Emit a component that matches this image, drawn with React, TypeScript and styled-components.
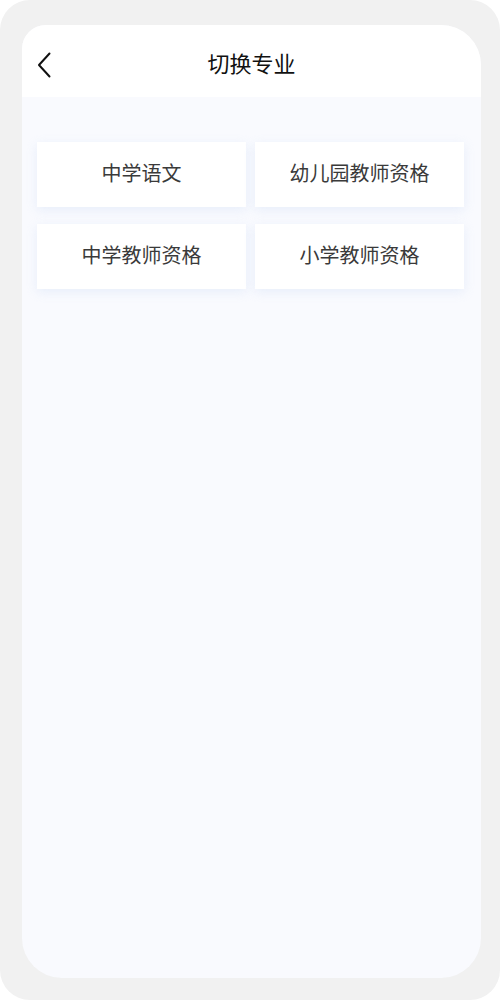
import React, { FC } from 'react';
import styled, { createGlobalStyle } from 'styled-components';

const GlobalStyle = createGlobalStyle`
    html, body {
        margin: 0;
        padding: 0;
        background: #ffffff;
    }
    body {
        font-family: "Noto Sans CJK SC", "Noto Sans", sans-serif;
    }
`;

const Frame = styled.div`
    width: 500px;
    height: 1000px;
    box-sizing: border-box;
    background-color: #f1f1f1;
    border-radius: 30px;
    padding: 25px 19px 22px 22px;
    display: flex;
`;

const Screen = styled.div`
    flex: 1;
    display: flex;
    flex-direction: column;
    background-color: #f9fafe;
    border-radius: 24px 40px 40px 40px;
    overflow: hidden;
`;

const Header = styled.div`
    position: relative;
    height: 72px;
    flex-shrink: 0;
    background-color: #ffffff;
    display: flex;
    align-items: center;
    justify-content: center;
    padding-top: 2px;
    box-sizing: border-box;
`;

const BackButton = styled.button`
    position: absolute;
    left: 10px;
    top: 25px;
    width: 24px;
    height: 30px;
    padding: 0;
    border: none;
    background: none;
    display: flex;
    align-items: center;
    justify-content: center;
    cursor: pointer;
`;

const Title = styled.h1`
    margin: 0;
    font-size: 22px;
    font-weight: 400;
    color: #111111;
    line-height: 1;
`;

const Grid = styled.div`
    display: grid;
    grid-template-columns: 209px 209px;
    column-gap: 9px;
    row-gap: 17px;
    padding: 45px 0 0 15px;
`;

const Card = styled.div`
    height: 65px;
    box-sizing: border-box;
    padding-bottom: 4px;
    background-color: #ffffff;
    box-shadow: 0 3px 10px rgba(210, 224, 246, 0.45);
    display: flex;
    align-items: center;
    justify-content: center;
    font-size: 20px;
    color: #3a3a3a;
    cursor: pointer;
`;

const majors = ['中学语文', '幼儿园教师资格', '中学教师资格', '小学教师资格'];

const App: FC = () => {
    return (
        <>
            <GlobalStyle />
            <Frame>
                <Screen>
                    <Header>
                        <BackButton aria-label="返回">
                            <svg width="14" height="26" viewBox="0 0 14 26" fill="none">
                                <path d="M12.5 1.5 L2 13 L12.5 24.5" stroke="#111" strokeWidth="2" strokeLinecap="round" strokeLinejoin="round" />
                            </svg>
                        </BackButton>
                        <Title>切换专业</Title>
                    </Header>
                    <Grid>
                        {majors.map((m) => (
                            <Card key={m}>{m}</Card>
                        ))}
                    </Grid>
                </Screen>
            </Frame>
        </>
    );
};

export default App;
